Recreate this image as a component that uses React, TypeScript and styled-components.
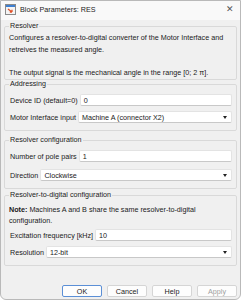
import React from 'react';
import styled, { createGlobalStyle } from 'styled-components';

const GlobalStyle = createGlobalStyle`
  html, body {
    margin: 0;
    padding: 0;
    background: #ffffff;
  }
  body {
    font-family: "Liberation Sans", Arial, sans-serif;
    font-size: 7.2px;
    color: #1a1a1a;
  }
  * {
    box-sizing: border-box;
  }
`;

const Window = styled.div`
  width: 241px;
  height: 300px;
  display: flex;
  flex-direction: column;
  background: #f0f0f0;
  border: 1px solid #b9b9b9;
  border-radius: 0 0 6px 6px;
  overflow: hidden;
`;

const TitleBar = styled.div`
  height: 19px;
  display: flex;
  align-items: center;
  padding: 0 6px 2px 4px;
  background: #f9f9f9;
  flex-shrink: 0;
`;

const Title = styled.span`
  flex: 1;
  margin-left: 4px;
  font-size: 7.2px;
  color: #222;
`;

const CloseGlyph = styled.span`
  font-size: 9px;
  color: #555;
  line-height: 1;
`;

const Body = styled.div`
  flex: 1;
  display: flex;
  flex-direction: column;
  padding: 2px 3px 0 3px;
`;

const Group = styled.fieldset<{ $top?: number; $padTop?: number; $padBottom?: number }>`
  margin: ${p => p.$top ?? 0}px 0 0 0;
  padding: ${p => p.$padTop ?? 0}px 4px ${p => p.$padBottom ?? 7}px 4px;
  border: 1px solid #d9d9d9;
  border-radius: 2px;
  min-width: 0;
`;

const Legend = styled.legend`
  padding: 0 1px;
  margin-left: 0;
  font-size: 7.2px;
  line-height: 8px;
  color: #222;
`;

const Text = styled.p<{ $lh?: number }>`
  margin: 0;
  line-height: ${p => p.$lh ?? 12}px;
`;

const Spacer = styled.div<{ $h: number }>`
  height: ${p => p.$h}px;
`;

const Strong = styled.b`
  font-weight: 700;
  margin-right: 2px;
`;

const Row = styled.div<{ $top: number }>`
  display: flex;
  align-items: center;
  gap: 2px;
  height: 12px;
  margin-top: ${p => p.$top}px;
`;

const Label = styled.span`
  white-space: nowrap;
  padding-left: 1px;
`;

const Field = styled.div`
  flex: 1;
  height: 12px;
  display: flex;
  align-items: center;
  justify-content: space-between;
  padding: 0 3px;
  background: #ffffff;
  border: 1px solid #e3e3e3;
  border-bottom-color: #c8c8c8;
  border-radius: 2px;
`;

const Caret = styled.span`
  width: 0;
  height: 0;
  border-left: 2.5px solid transparent;
  border-right: 2.5px solid transparent;
  border-top: 3px solid #222;
  margin-right: 1px;
`;

const Footer = styled.div`
  margin-top: auto;
  display: flex;
  justify-content: flex-end;
  gap: 5px;
  padding: 0 0 2px 0;
`;

const Button = styled.button<{ $primary?: boolean; $disabled?: boolean }>`
  width: 40px;
  height: 12px;
  padding: 0;
  font-family: inherit;
  font-size: 7.2px;
  color: ${p => (p.$disabled ? '#a0a0a0' : '#1a1a1a')};
  background: #fdfdfd;
  border: 1px solid ${p => (p.$primary ? '#5b8fd6' : '#d5d5d5')};
  border-radius: 2px;
`;

const AppIcon = () => (
  <svg width="11" height="11" viewBox="0 0 11 11">
    <rect x="0.5" y="0.5" width="10" height="10" fill="#f4f4f4" stroke="#8a8a8a" />
    <rect x="1" y="1" width="9" height="2" fill="#3d7fd1" />
    <path d="M3 5 L7 8 M7 8 L7 5.8 M7 8 L4.8 8" stroke="#e0522a" strokeWidth="1.3" fill="none" />
  </svg>
);

const Dropdown = ({ value }: { value: string }) => (
  <Field>
    <span>{value}</span>
    <Caret />
  </Field>
);

export default function App() {
  return (
    <>
      <GlobalStyle />
      <Window>
        <TitleBar>
          <AppIcon />
          <Title>Block Parameters: RES</Title>
          <CloseGlyph>✕</CloseGlyph>
        </TitleBar>
        <Body>
          <Group $padTop={2} $padBottom={0}>
            <Legend>Resolver</Legend>
            <Text>
              Configures a resolver-to-digital converter of the Motor Interface and retreives the measured angle.
            </Text>
            <Spacer $h={11} />
            <Text>The output signal is the mechanical angle in the range [0; 2 π].</Text>
          </Group>

          <Group>
            <Legend>Addressing</Legend>
            <Row $top={6}>
              <Label>Device ID (default=0)</Label>
              <Field>0</Field>
            </Row>
            <Row $top={5}>
              <Label>Motor Interface input</Label>
              <Dropdown value="Machine A (connector X2)" />
            </Row>
          </Group>

          <Group $top={5}>
            <Legend>Resolver configuration</Legend>
            <Row $top={6}>
              <Label>Number of pole pairs</Label>
              <Field>1</Field>
            </Row>
            <Row $top={7}>
              <Label>Direction</Label>
              <Dropdown value="Clockwise" />
            </Row>
          </Group>

          <Group $top={2} $padTop={5}>
            <Legend>Resolver-to-digital configuration</Legend>
            <Text $lh={11}>
              <Strong>Note:</Strong>
              <span>Machines A and B share the same resolver-to-digital configuration.</span>
            </Text>
            <Row $top={3}>
              <Label>Excitation frequency [kHz]</Label>
              <Field>10</Field>
            </Row>
            <Row $top={5}>
              <Label>Resolution</Label>
              <Dropdown value="12-bit" />
            </Row>
          </Group>

          <Footer>
            <Button $primary>OK</Button>
            <Button>Cancel</Button>
            <Button>Help</Button>
            <Button $disabled>Apply</Button>
          </Footer>
        </Body>
      </Window>
    </>
  );
}
